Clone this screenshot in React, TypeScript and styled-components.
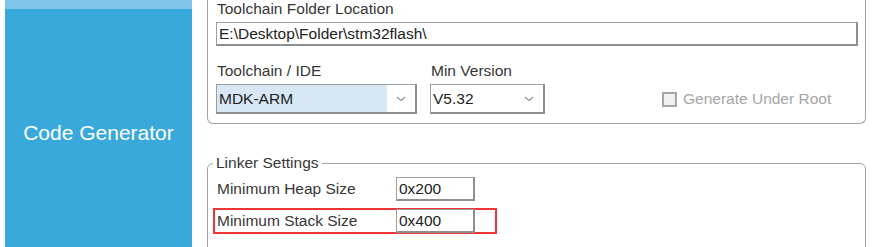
import React from 'react';
import styled, { createGlobalStyle } from 'styled-components';

const GlobalStyle = createGlobalStyle`
  html, body {
    margin: 0;
    padding: 0;
    background: #ffffff;
    overflow: hidden;
  }
  body {
    font-family: "Liberation Sans", Arial, sans-serif;
    color: #333333;
  }
`;

const Page = styled.div`
  display: flex;
  flex-direction: row;
  height: 247px;
  padding-left: 5px;
  gap: 15px;
`;

const Sidebar = styled.div`
  width: 187px;
  flex: none;
  display: flex;
  flex-direction: column;
  background-color: #39a9dc;
`;

const SidebarStripe = styled.div`
  height: 9px;
  background-color: #7fc5e9;
`;

const SidebarTitle = styled.div`
  flex: 1;
  display: flex;
  align-items: center;
  justify-content: center;
  padding-top: 10px;
  color: #ffffff;
  font-size: 21px;
`;

const Main = styled.div`
  width: 659px;
  flex: none;
  display: flex;
  flex-direction: column;
`;

const TopGroup = styled.div`
  border: 1px solid #9ea3a8;
  border-top: none;
  border-radius: 0 0 6px 6px;
  padding: 0 7px 9px 8px;
`;

const Label = styled.div`
  font-size: 15.5px;
  line-height: 18px;
  height: 18px;
  padding-left: 1px;
  color: #363636;
`;

const TextBox = styled.div<{ $width?: number }>`
  box-sizing: border-box;
  height: 24px;
  width: ${p => (p.$width ? `${p.$width}px` : '100%')};
  border: 1px solid #9a9fa4;
  border-right: 2px solid #8a8f94;
  border-bottom: 2px solid #8a8f94;
  font-size: 15.5px;
  line-height: 21px;
  padding-left: 2px;
  color: #222222;
  background: #ffffff;
`;

const PathBox = styled(TextBox)`
  margin-top: 4px;
  margin-bottom: 16px;
`;

const SelectRow = styled.div`
  display: flex;
  align-items: flex-end;
  gap: 13px;
`;

const Field = styled.div`
  display: flex;
  flex-direction: column;
  gap: 4px;
`;

const Select = styled.div<{ $width: number }>`
  box-sizing: border-box;
  width: ${p => p.$width}px;
  height: 30px;
  display: flex;
  align-items: stretch;
  border: 1px solid #9a9fa4;
  border-right: 2px solid #8a8f94;
  border-bottom: 2px solid #8a8f94;
  background: #ffffff;
`;

const SelectValue = styled.div<{ $selected?: boolean }>`
  flex: 1;
  display: flex;
  align-items: center;
  padding-left: 2px;
  font-size: 15.5px;
  color: #222222;
  background: ${p => (p.$selected ? '#d8e7f5' : 'transparent')};
`;

const Chevron = styled.div`
  width: 28px;
  display: flex;
  align-items: center;
  justify-content: center;
`;

const CheckField = styled.label`
  display: flex;
  align-items: center;
  gap: 6px;
  margin-left: 104px;
  height: 30px;
  color: #a5a5a5;
  font-size: 15.5px;
`;

const CheckBox = styled.span`
  box-sizing: border-box;
  width: 15px;
  height: 15px;
  border: 2px solid #a3a6a9;
  background: #eef0f2;
`;

const LinkerSet = styled.fieldset`
  margin: 30px 0 0 0;
  border: 1px solid #9ea3a8;
  border-radius: 6px;
  padding: 4px 0 40px 5px;
  display: flex;
  flex-direction: column;
  gap: 6px;
`;

const Legend = styled.legend`
  font-size: 15.5px;
  line-height: 18px;
  padding: 0 3px;
  margin-left: 0;
  color: #363636;
`;

const SettingRow = styled.div<{ $highlight?: boolean }>`
  box-sizing: border-box;
  width: 284px;
  height: 26px;
  display: flex;
  align-items: center;
  padding-left: 2px;
  border: 2px solid ${p => (p.$highlight ? '#ee3434' : 'transparent')};
`;

const SettingLabel = styled.div`
  width: 179px;
  font-size: 15.5px;
  color: #363636;
`;

const ChevronIcon = () => (
  <svg width="10" height="6" viewBox="0 0 10 6">
    <polyline points="1,1 5,4.5 9,1" fill="none" stroke="#8f9499" strokeWidth="1.2" />
  </svg>
);

const App: React.FC = () => {
  return (
    <>
      <GlobalStyle />
      <Page>
        <Sidebar>
          <SidebarStripe />
          <SidebarTitle>Code Generator</SidebarTitle>
        </Sidebar>
        <Main>
          <TopGroup>
            <Label>Toolchain Folder Location</Label>
            <PathBox>E:\Desktop\Folder\stm32flash\</PathBox>
            <SelectRow>
              <Field>
                <Label>Toolchain / IDE</Label>
                <Select $width={201}>
                  <SelectValue $selected>MDK-ARM</SelectValue>
                  <Chevron><ChevronIcon /></Chevron>
                </Select>
              </Field>
              <Field>
                <Label>Min Version</Label>
                <Select $width={115}>
                  <SelectValue>V5.32</SelectValue>
                  <Chevron><ChevronIcon /></Chevron>
                </Select>
              </Field>
              <CheckField>
                <CheckBox />
                Generate Under Root
              </CheckField>
            </SelectRow>
          </TopGroup>
          <LinkerSet>
            <Legend>Linker Settings</Legend>
            <SettingRow>
              <SettingLabel>Minimum Heap Size</SettingLabel>
              <TextBox $width={79}>0x200</TextBox>
            </SettingRow>
            <SettingRow $highlight>
              <SettingLabel>Minimum Stack Size</SettingLabel>
              <TextBox $width={79}>0x400</TextBox>
            </SettingRow>
          </LinkerSet>
        </Main>
      </Page>
    </>
  );
};

export default App;
